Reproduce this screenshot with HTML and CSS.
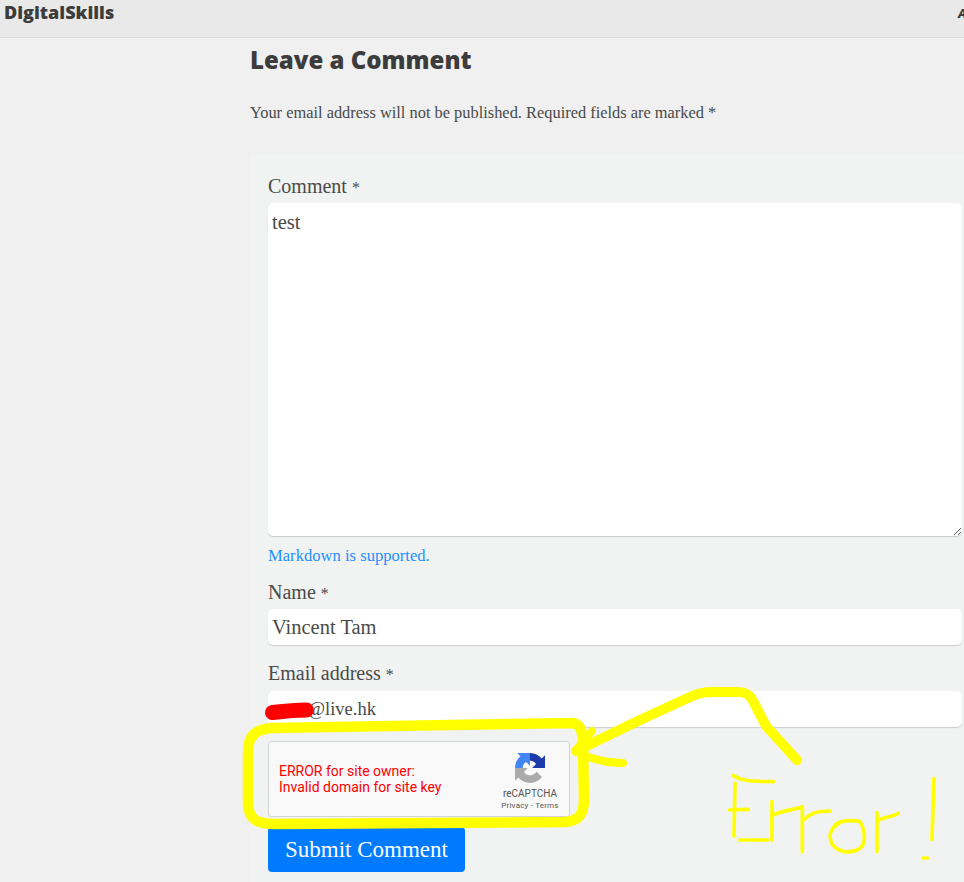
FILE: index.html
```html
<!DOCTYPE html>
<html lang="en">
<head>
<meta charset="utf-8">
<title>Leave a Comment</title>
<link rel="stylesheet" href="styles.css">
</head>
<body>
<header class="topbar">
  <a class="brand" href="#">DigitalSkills</a>
  <a class="nav-item" href="#">About</a>
</header>
<main class="content">
  <h2 class="title">Leave a Comment</h2>
  <p class="note">Your email address will not be published. Required fields are marked *</p>
  <form class="card">
    <label class="label" for="c">Comment <span class="req">*</span></label>
    <textarea class="field area" id="c">test</textarea>
    <p class="hint">Markdown is supported.</p>
    <label class="label name" for="n">Name <span class="req">*</span></label>
    <input class="field line" id="n" value="Vincent Tam">
    <label class="label email" for="e">Email address <span class="req">*</span></label>
    <input class="field line mail" id="e" value="@live.hk">
    <div class="captcha">
      <div class="captcha-error">ERROR for site owner:<br>Invalid domain for site key</div>
      <div class="captcha-brand">
        <svg class="captcha-logo" viewBox="0 0 64 64" width="30" height="30">
          <path fill="#1c3aa9" d="M64 31.955l-.033-1.37V4.687l-7.16 7.16C50.948 4.674 42.033.093 32.05.093c-.7 0-1.4.02-2.05.06v16.2c.6-.1 1.3-.16 2-.16.485 0 .86.057 1.135.163 4.976.393 9.288 3.14 11.828 7.124l-8.307 8.307 26.3.006"/>
          <path fill="#4285f4" d="M31.862 0l-1.37.033H4.594l7.16 7.16C4.58 13.05 0 21.967 0 31.95c0 .7.02 1.3.06 2h16.3c-.07-.6-.1-1.3-.1-2 0-.485.057-.86.163-1.135.393-4.976 3.14-9.288 7.124-11.828l8.307 8.307.006-26.3"/>
          <path fill="#ababab" d="M.002 31.955l.033 1.37v25.9l7.16-7.16c5.86 7.173 14.774 11.754 24.76 11.754 10.4 0 19.622-4.96 25.458-12.64l-11.736-11.86a15.55 15.55 0 0 1-4.754 5.334c-2.05 1.6-4.952 2.906-8.968 2.906-.485 0-.86-.057-1.135-.163-4.976-.393-9.288-3.14-11.828-7.124l8.307-8.307-26.3-.006"/>
        </svg>
        <div class="captcha-name">reCAPTCHA</div>
        <div class="captcha-links">Privacy - Terms</div>
      </div>
    </div>
    <button class="submit" type="button">Submit Comment</button>
  </form>
</main>
<svg class="markup" viewBox="0 0 964 882" width="964" height="882">
  <path class="redact" d="M272.5 712.5 C285 711 298 710 306.5 710"/>
  <path class="ring" d="M573 723 C580 724 583 732 583 745 L584 800 C584 815 578 821 565 822 L275 824 C258 824 249 820 248 805 L248 752 C248 735 256 729 273 728 Z"/>
  <path class="arrow" d="M576 751 L640 720 L690 697 C698 693 705 692 712 692 L738 692 C746 692 750 695 753 701 L766 726 L797 760"/>
  <path class="arrowhead" d="M592 731 L575 751 C590 759 605 763 623 763"/>
  <g class="writing" transform="translate(640 680) scale(.3333)">
    <path d="M280 287 C300 300 320 305 400 305"/>
    <path d="M285 310 L282 468"/>
    <path d="M268 390 L325 388"/>
    <path d="M300 480 L382 480"/>
    <path d="M396 365 L396 480"/>
    <path d="M400 405 C420 395 450 390 485 382"/>
    <path d="M487 380 L487 515"/>
    <path d="M490 420 C510 400 530 393 570 393"/>
    <path d="M585 435 C600 420 640 420 660 425 C675 450 680 490 660 505 C630 525 590 515 575 490 C565 465 570 445 600 428"/>
    <path d="M711 398 L711 515"/>
    <path d="M715 420 C740 410 760 410 775 400"/>
    <path d="M882 296 L876 478"/>
    <path d="M850 534 L862 534"/>
  </g>
</svg>
</body>
</html>
```
FILE: styles.css
```css
html, body {
  margin: 0;
  height: 882px;
  overflow: hidden;
}
body {
  position: relative;
  background: #f0f0f0;
  color: #4a4a4a;
  font-family: "Liberation Serif", serif;
}
.topbar {
  display: flex;
  align-items: flex-start;
  justify-content: space-between;
  height: 37px;
  padding-left: 4px;
  background: #e9e9e9;
  border-bottom: 1px solid #ddd;
}
.brand, .nav-item {
  font-family: "Open Sans", sans-serif;
  font-weight: 800;
  color: #3c3c3c;
  text-decoration: none;
}
.brand {
  font-size: 18px;
  line-height: 25px;
}
.nav-item {
  width: 6px;
  font-size: 13px;
  line-height: 26px;
  font-style: italic;
  white-space: nowrap;
}
.content {
  margin-left: 250px;
  width: 730px;
}
.title {
  margin: 0;
  padding-top: 4px;
  font-family: "Open Sans", sans-serif;
  font-size: 24px;
  line-height: 36px;
  font-weight: 800;
  color: #3c3c3c;
}
.note {
  margin: 23px 0 0;
  font-size: 16.4px;
  line-height: 24px;
}
.card {
  margin-top: 29px;
  padding: 20px 18px 40px;
  background: #f1f3f3;
  display: flex;
  flex-direction: column;
  align-items: flex-start;
}
.label {
  font-size: 20px;
  line-height: 24px;
}
.req { font-size: 16px; }
.field {
  box-sizing: border-box;
  display: block;
  width: 694px;
  border: 0;
  border-radius: 5px;
  background: #fff;
  box-shadow: 0 1px 1px #ccc;
  color: #4a4a4a;
  font-family: "Liberation Serif", serif;
  font-size: 20.5px;
  outline: none;
}
.area {
  height: 333px;
  margin-top: 3px;
  padding: 7px 4px;
  line-height: 24px;
  resize: vertical;
}
.hint {
  margin: 8px 0 0;
  font-size: 16.6px;
  line-height: 24px;
  color: #1e90ff;
}
.name { margin-top: 12px; }
.line {
  height: 36px;
  margin-top: 3px;
  padding: 0 4px;
}
.email { margin-top: 16px; }
.mail { margin-top: 4px; padding-left: 40px; font-size: 18.5px; }
.captcha {
  box-sizing: border-box;
  display: flex;
  justify-content: space-between;
  align-items: center;
  width: 302px;
  height: 76px;
  margin-top: 14px;
  padding-left: 10px;
  background: #f9f9f9;
  border: 1px solid #d3d3d3;
  border-radius: 3px;
}
.captcha-error {
  font-family: Roboto, sans-serif;
  font-size: 14px;
  line-height: 16px;
  color: #f00;
}
.captcha-brand {
  display: flex;
  flex-direction: column;
  align-items: center;
  width: 78px;
  padding-top: 6px;
  font-family: Roboto, sans-serif;
  color: #555;
}
.captcha-logo { display: block; }
.captcha-name {
  margin-top: 4px;
  font-size: 10px;
  line-height: 14px;
}
.captcha-links {
  font-size: 8px;
  line-height: 10px;
  letter-spacing: .2px;
}
.submit {
  width: 197px;
  height: 45px;
  margin-top: 10px;
  border: 0;
  border-radius: 4px;
  background: #007bff;
  color: #fff;
  font-family: "Liberation Serif", serif;
  font-size: 23px;
}
.markup {
  position: absolute;
  left: 0;
  top: 0;
  pointer-events: none;
}
.markup path { fill: none; stroke-linecap: round; stroke-linejoin: round; }
.redact { stroke: #f00; stroke-width: 15; }
.ring { stroke: #ff0; stroke-width: 10.5; }
.arrow { stroke: #ff0; stroke-width: 10; }
.arrowhead { stroke: #ff0; stroke-width: 8; }
.writing path { stroke: #ff0; stroke-width: 11; }
```
